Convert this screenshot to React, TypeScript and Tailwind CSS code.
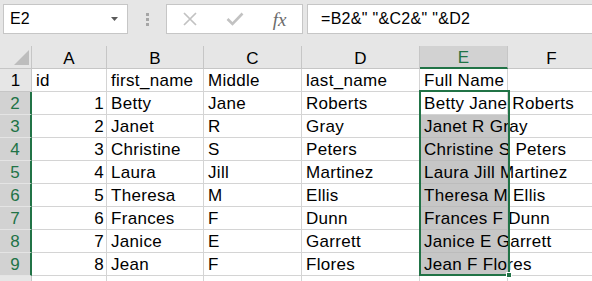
import React from "react";

const people = [
  ["Betty", "Jane", "Roberts"],
  ["Janet", "R", "Gray"],
  ["Christine", "S", "Peters"],
  ["Laura", "Jill", "Martinez"],
  ["Theresa", "M", "Ellis"],
  ["Frances", "F", "Dunn"],
  ["Janice", "E", "Garrett"],
  ["Jean", "F", "Flores"],
];

const cell =
  "flex items-end pb-px pl-[4px] border-r border-b border-[#d4d4d4] bg-white whitespace-nowrap leading-[18px] tracking-[0.3px]";
const colHead =
  "flex items-end justify-center border-r border-b border-[#c6c6c6] bg-[#e6e6e6] leading-[18px]";
const rowHead =
  "flex items-end justify-center pb-px border-r border-b border-[#c6c6c6] bg-[#e6e6e6] leading-[18px]";
const rowHeadSel =
  "flex items-end justify-center pb-px border-b border-b-[#e4e4e4] border-r-2 border-r-[#217346] bg-[#d2d2d2] text-[#217346] leading-[18px]";

const TopBar: React.FC = () => {
  return (
    <div className="flex h-[46px] pt-[4px] text-[16px]">
      <div className="ml-[3px] flex h-[30px] w-[125px] items-center justify-between border border-[#c6c6c6] bg-white pl-[6px] pr-[9px]">
        <span>E2</span>
        <svg width="7" height="4" viewBox="0 0 7 4">
          <polygon points="0,0 7,0 3.5,4" fill="#5a5a5a" />
        </svg>
      </div>
      <div className="flex h-[30px] w-[38px] flex-col items-center justify-center gap-[2px]">
        <div className="h-[3px] w-[3px] bg-[#a6a6a6]" />
        <div className="h-[3px] w-[3px] bg-[#a6a6a6]" />
        <div className="h-[3px] w-[3px] bg-[#a6a6a6]" />
      </div>
      <div className="grid h-[30px] w-[137px] grid-cols-[45px_45px_45px] items-center justify-items-center border border-[#c6c6c6] bg-white">
        <svg width="14" height="14" viewBox="0 0 14 14">
          <path d="M1 1 L13 13 M13 1 L1 13" stroke="#c2c2c2" strokeWidth="1.7" fill="none" />
        </svg>
        <svg width="18" height="14" viewBox="0 0 18 14">
          <path d="M1.5 7 L6.5 12 L16.5 1.5" stroke="#c2c2c2" strokeWidth="2.6" fill="none" />
        </svg>
        <span className="font-['Liberation_Serif',serif] text-[19px] italic leading-none text-[#6b6b6b]">
          fx
        </span>
      </div>
      <div className="ml-[4px] flex h-[30px] flex-1 items-center border border-r-0 border-[#c6c6c6] bg-white pl-[13px] whitespace-nowrap tracking-[0.3px]">
        =B2&amp;" "&amp;C2&amp;" "&amp;D2
      </div>
    </div>
  );
};

export default function App() {
  return (
    <div className="h-[281px] w-[592px] overflow-hidden bg-[#e6e6e6] font-['Liberation_Sans',Arial,sans-serif] text-[17px] text-black">
      <TopBar />
      <div className="relative grid w-max grid-cols-[32px_75px_97px_98px_118px_88px_88px] auto-rows-[23px]">
        {/* column headers */}
        <div className="relative border-r border-b border-[#c6c6c6] bg-[#e6e6e6]">
          <svg className="absolute left-0 top-0" width="32" height="23" viewBox="0 0 32 23">
            <polygon points="29,4 29,19 14,19" fill="#bdbdbd" />
          </svg>
        </div>
        <div className={colHead}>A</div>
        <div className={colHead}>B</div>
        <div className={colHead}>C</div>
        <div className={colHead}>D</div>
        <div className="flex items-end justify-center border-r border-r-[#c6c6c6] border-b-2 border-b-[#217346] bg-[#d2d2d2] text-[#217346] leading-[18px]">
          E
        </div>
        <div className={colHead}>F</div>

        {/* row 1 */}
        <div className={rowHead}>1</div>
        <div className={cell}>id</div>
        <div className={cell}>first_name</div>
        <div className={cell}>Middle</div>
        <div className={cell}>last_name</div>
        <div className={cell}>Full Name</div>
        <div className={cell}></div>

        {people.map((p, i) => (
          <React.Fragment key={i}>
            <div className={rowHeadSel}>{i + 2}</div>
            <div className={cell + " justify-end pr-[2px]"}>{i + 1}</div>
            <div className={cell}>{p[0]}</div>
            <div className={cell}>{p[1]}</div>
            <div className={cell}>{p[2]}</div>
            <div
              className={
                "relative z-[1] flex items-end pb-px pl-[4px] border-r border-b whitespace-nowrap leading-[18px] tracking-[0.3px] " +
                (i === 0 ? "bg-white border-[#d4d4d4]" : "bg-[#c6c6c6] border-[#bcbcbc]")
              }
            >
              {`${p[0]} ${p[1]} ${p[2]}`}
            </div>
            <div className="border-r border-b border-[#d4d4d4] bg-white" />
          </React.Fragment>
        ))}

        {/* row 10, only its top edge is on screen */}
        <div className="border-r border-b border-[#c6c6c6] bg-[#e6e6e6]" />
        <div className={cell}></div>
        <div className={cell}></div>
        <div className={cell}></div>
        <div className={cell}></div>
        <div className={cell}></div>
        <div className={cell}></div>

        {/* selection E2:E9 */}
        <div className="pointer-events-none absolute left-[419px] top-[44px] z-[2] h-[186px] w-[91px] border-2 border-[#217346]" />
        <div className="pointer-events-none absolute left-[506px] top-[226px] z-[3] h-[6px] w-[6px] border border-white bg-[#217346]" />
      </div>
    </div>
  );
}
